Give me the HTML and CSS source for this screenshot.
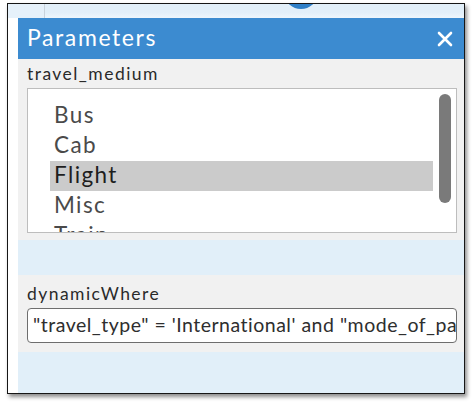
FILE: index.html
```html
<!DOCTYPE html>
<html>
<head>
<meta charset="utf-8">
<link rel="stylesheet" href="styles.css">
</head>
<body>
<div class="frame">
  <div class="topstrip">
    <div class="topstrip-left"></div>
    <div class="topstrip-main"><span class="dot"></span></div>
  </div>
  <div class="stage">
    <div class="gutter"></div>
    <div class="dialog">
      <div class="dialog-header">
        <span class="dialog-title">Parameters</span>
        <svg class="close" width="16" height="16" viewBox="0 0 16 16"><path d="M2 2 L14 14 M14 2 L2 14" stroke="#fff" stroke-width="2.6" stroke-linecap="round"/></svg>
      </div>
      <div class="dialog-body">
        <div class="card card-list">
          <div class="label">travel_medium</div>
          <div class="listbox">
            <div class="items">
              <div class="item">Bus</div>
              <div class="item">Cab</div>
              <div class="item selected">Flight</div>
              <div class="item">Misc</div>
              <div class="item">Train</div>
            </div>
            <div class="scroll"><div class="thumb"></div></div>
          </div>
        </div>
        <div class="card card-input">
          <div class="label">dynamicWhere</div>
          <div class="textbox">"travel_type" = 'International' and "mode_of_payment" = 'Card'</div>
        </div>
      </div>
    </div>
  </div>
</div>
</body>
</html>
```
FILE: styles.css
```css
* { box-sizing: border-box; }
html, body { margin: 0; padding: 0; background: #fff; }
body { font-family: "Lato", "Noto Sans", sans-serif; width: 474px; height: 404px; overflow: hidden; }

.frame {
  margin: 3px 0 0 7px;
  width: 458px;
  height: 391px;
  border: 1.5px solid #161616;
  background: #fff;
  box-shadow: 2px 3px 4px rgba(0,0,0,0.45);
  display: flex;
  flex-direction: column;
  overflow: hidden;
}
.topstrip { height: 14px; display: flex; flex: none; }
.topstrip-left { width: 37px; background: #e6f1fa; border-right: 1px solid #c9d3dc; }
.topstrip-main { flex: 1; background: linear-gradient(#e2eff9 0 60%, #eef6fc 100%); position: relative; overflow: hidden; }
.dot { position: absolute; left: 240px; top: -24px; width: 32px; height: 29px; border-radius: 50%; background: #2f7fc7; }

.stage { flex: 1; display: flex; min-height: 0; }
.gutter { width: 10px; flex: none; background: #fff; }
.dialog { flex: 1; min-width: 0; display: flex; flex-direction: column; }
.dialog-header {
  height: 41px; flex: none;
  background: #3c8bd0;
  display: flex; align-items: center; justify-content: space-between;
  padding: 0 11px 0 9px;
}
.dialog-title { color: #fff; font-size: 23px; letter-spacing: 1.6px; line-height: 1; padding-bottom: 2px; }
.close { display: block; margin-top: 1px; }

.dialog-body { flex: 1; background: #e1eff9; display: flex; flex-direction: column; gap: 35px; }
.card { background: #f1f1f1; padding: 0 7px 0 9px; }
.card-list { height: 181px; padding-top: 3px; }
.card-input { height: 77px; padding-top: 7px; }
.label { font-size: 17.5px; color: #2a2a2a; height: 26px; line-height: 24px; letter-spacing: 1.45px; }

.listbox {
  height: 145px;
  background: #fff;
  border: 1px solid #bdbdbd;
  display: flex;
  overflow: hidden;
}
.items { flex: 1; min-width: 0; padding: 12px 0 0 22px; }
.item { height: 30px; line-height: 27px; font-size: 22.5px; color: #4a4a4a; padding-left: 4px; letter-spacing: 1.4px; }
.item.selected { background: #cbcbcb; color: #1e1e1e; }
.scroll { width: 23px; flex: none; padding: 5px 5px 0 6px; }
.thumb { width: 12px; height: 109px; border-radius: 6px; background: #7a7a7a; }

.textbox {
  height: 35px;
  border: 1.5px solid #6e6e6e;
  border-radius: 4px;
  background: #fff;
  padding: 0 0 0 5px;
  font-size: 19.5px;
  line-height: 31px;
  color: #2e2e2e;
  white-space: nowrap;
  overflow: hidden;
  letter-spacing: 0.5px;
}
```
